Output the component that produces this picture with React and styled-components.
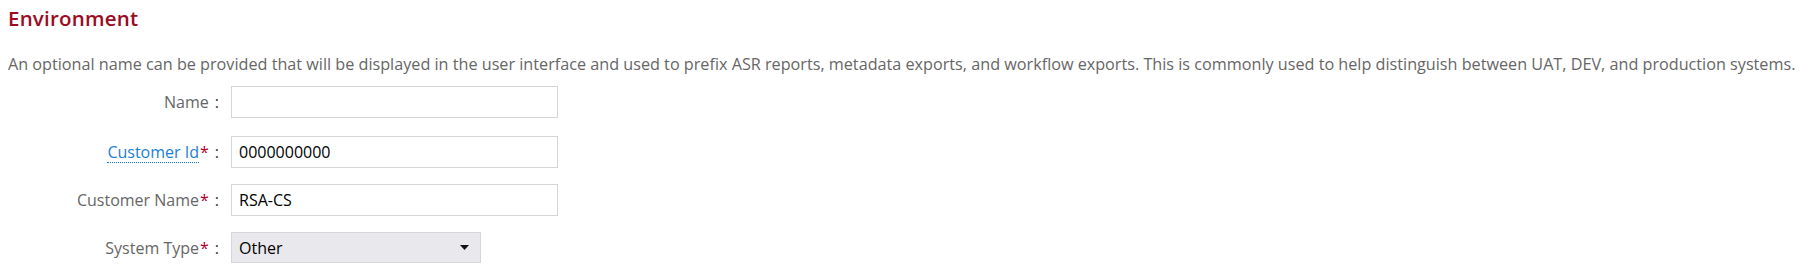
import React, { useState } from 'react';
import styled, { createGlobalStyle } from 'styled-components';

const GlobalStyle = createGlobalStyle`
  html, body {
    margin: 0;
    padding: 0;
    background: #fff;
  }
  body {
    font-family: "Open Sans", "Noto Sans", Arial, sans-serif;
  }
`;

const Section = styled.section`
  padding: 4px 8px 0 8px;
`;

const Title = styled.h2`
  margin: 0;
  font-size: 20.5px;
  line-height: 28px;
  font-weight: 600;
  color: #9b0b22;
  letter-spacing: 0.2px;
`;

const Description = styled.p`
  margin: 21px 0 11px 0;
  font-size: 16.2px;
  line-height: 22px;
  color: #666;
  white-space: nowrap;
`;

const Form = styled.form`
  display: flex;
  flex-direction: column;
  gap: 16px;
`;

const Row = styled.div`
  display: flex;
  align-items: center;
  margin-top: ${(p) => (p.$hint ? '2px' : '0')};
`;

const LabelCell = styled.div`
  width: 211px;
  flex-shrink: 0;
  display: flex;
  justify-content: flex-end;
  align-items: center;
  font-size: 16px;
  color: #666;
`;

const LabelText = styled.label`
  color: ${(p) => (p.$hint ? '#1b7fd4' : '#666')};
  border-bottom: ${(p) => (p.$hint ? '1px dotted #1b7fd4' : 'none')};
  line-height: ${(p) => (p.$hint ? '19px' : 'normal')};
  margin-top: ${(p) => (p.$hint ? '1px' : '0')};
  cursor: ${(p) => (p.$hint ? 'help' : 'default')};
`;

const Required = styled.span`
  color: #b0002a;
  margin-left: 1px;
`;

const Colon = styled.span`
  color: #333;
  margin-left: 6px;
`;

const TextInput = styled.input`
  box-sizing: border-box;
  margin-left: 12px;
  width: 327px;
  height: 32px;
  padding: 0 7px;
  border: 1px solid #d6d6d6;
  border-radius: 0;
  font-family: inherit;
  font-size: 16px;
  color: #000;
  background: #fff;
  outline: none;
`;

const SelectBox = styled.div`
  position: relative;
  box-sizing: border-box;
  margin-left: 12px;
  width: 250px;
  height: 31px;
  border: 1px solid #d6d6d6;
  background: #e9e9ed;
`;

const Select = styled.select`
  appearance: none;
  width: 100%;
  height: 100%;
  border: none;
  background: transparent;
  padding: 0 7px;
  font-family: inherit;
  font-size: 16px;
  color: #000;
  outline: none;
`;

const Caret = styled.svg`
  position: absolute;
  right: 11px;
  top: 12px;
  pointer-events: none;
`;

function Field({ label, required, hint, children }) {
  return (
    <Row $hint={hint}>
      <LabelCell>
        <LabelText $hint={hint} title={hint}>{label}</LabelText>
        {required && <Required>*</Required>}
        <Colon>:</Colon>
      </LabelCell>
      {children}
    </Row>
  );
}

export default function App() {
  const [form, setForm] = useState({
    name: '',
    customerId: '0000000000',
    customerName: 'RSA-CS',
    systemType: 'Other',
  });

  const update = (key) => (e) => setForm({ ...form, [key]: e.target.value });

  return (
    <>
      <GlobalStyle />
      <Section>
        <Title>Environment</Title>
        <Description>
          An optional name can be provided that will be displayed in the user interface and used to prefix ASR reports, metadata exports, and workflow exports. This is commonly used to help distinguish between UAT, DEV, and production systems.
        </Description>
        <Form onSubmit={(e) => e.preventDefault()}>
          <Field label="Name">
            <TextInput value={form.name} onChange={update('name')} />
          </Field>
          <Field label="Customer Id" required hint="Unique customer identifier">
            <TextInput value={form.customerId} onChange={update('customerId')} />
          </Field>
          <Field label="Customer Name" required>
            <TextInput value={form.customerName} onChange={update('customerName')} />
          </Field>
          <Field label="System Type" required>
            <SelectBox>
              <Select value={form.systemType} onChange={update('systemType')}>
                <option>Production</option>
                <option>UAT</option>
                <option>DEV</option>
                <option>Other</option>
              </Select>
              <Caret width="9" height="5" viewBox="0 0 9 5">
                <path d="M0 0 H9 L4.5 5 Z" fill="#111" />
              </Caret>
            </SelectBox>
          </Field>
        </Form>
      </Section>
    </>
  );
}
